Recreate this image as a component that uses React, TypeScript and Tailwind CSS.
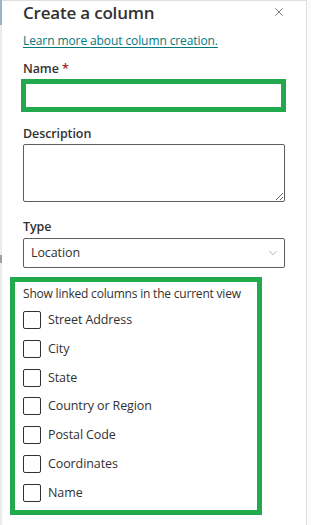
import { ChevronDown, X } from 'lucide-react';

const linkedColumns = [
  'Street Address',
  'City',
  'State',
  'Country or Region',
  'Postal Code',
  'Coordinates',
  'Name',
];

export default function App() {
  return (
    <div
      className="w-[311px] h-[525px] flex bg-white text-[#323130] overflow-hidden"
      style={{ fontFamily: '"Open Sans", "Noto Sans", sans-serif' }}
    >
      {/* left edge of the page behind the panel */}
      <div className="w-[2px] flex flex-col bg-[#ebebf0]">
        <div className="h-[25px] bg-[#9bb4c8]" />
        <div className="h-[230px]" />
        <div className="h-[8px] bg-[#a0a0a0]" />
      </div>

      <div className="flex-1 flex flex-col border-t border-[#e1dfdd]">
        {/* Header */}
        <div className="flex items-start justify-between pl-[21px] pr-[20px]">
          <h1 className="text-[17px] leading-[23px] font-semibold text-[#323130] tracking-[-0.2px]">
            Create a column
          </h1>
          <button className="mt-[4px] text-[#484644]">
            <X className="w-[14px] h-[14px]" strokeWidth={1.2} />
          </button>
        </div>

        <a className="mt-[9px] ml-[21px] text-[12px] leading-[16px] text-[#03787c] underline underline-offset-2 tracking-[-0.1px]">
          Learn more about column creation.
        </a>

        {/* Name */}
        <label className="mt-[12px] ml-[21px] text-[12.5px] leading-[16px] font-semibold tracking-[-0.1px]">
          Name <span className="text-[#a4262c]">*</span>
        </label>
        <input className="mt-[2px] ml-[19px] w-[265px] h-[33px] border-[5px] border-[#22a84d] bg-white outline-none" />

        {/* Description */}
        <label className="mt-[14px] ml-[21px] text-[12.5px] leading-[16px] font-semibold tracking-[-0.1px]">
          Description
        </label>
        <textarea className="mt-[2px] ml-[21px] w-[262px] h-[58px] border border-[#605e5c] rounded-[2px] resize-y outline-none" />

        {/* Type */}
        <label className="mt-[17px] ml-[21px] text-[12.5px] leading-[16px] font-semibold tracking-[-0.1px]">
          Type
        </label>
        <div className="mt-[3px] ml-[21px] w-[262px] h-[30px] border border-[#605e5c] rounded-[2px] flex items-center justify-between pl-[7px] pr-[4px]">
          <span className="text-[12.5px] leading-[16px] tracking-[-0.1px]">Location</span>
          <ChevronDown className="w-[14px] h-[14px] text-[#8a8886]" strokeWidth={1.1} />
        </div>

        {/* Linked columns */}
        <div className="mt-[9px] ml-[8px] w-[252px] h-[238px] border-[5px] border-[#22a84d] pl-[8px] pt-[4px]">
          <p className="text-[12px] leading-[16px] text-[#323130] tracking-[-0.2px] whitespace-nowrap">
            Show linked columns in the current view
          </p>
          <div className="mt-[9px] flex flex-col gap-[10.8px]">
            {linkedColumns.map((col) => (
              <label key={col} className="flex items-center gap-[7px] h-[18px]">
                <span className="w-[18px] h-[18px] border border-[#323130] rounded-[2px] bg-white shrink-0" />
                <span className="text-[12.5px] leading-[16px] tracking-[-0.1px]">{col}</span>
              </label>
            ))}
          </div>
        </div>
      </div>

      {/* right edge of the panel */}
      <div className="w-[5px] border-l border-[#e1dfdd] bg-[#fafafa]" />
    </div>
  );
}
